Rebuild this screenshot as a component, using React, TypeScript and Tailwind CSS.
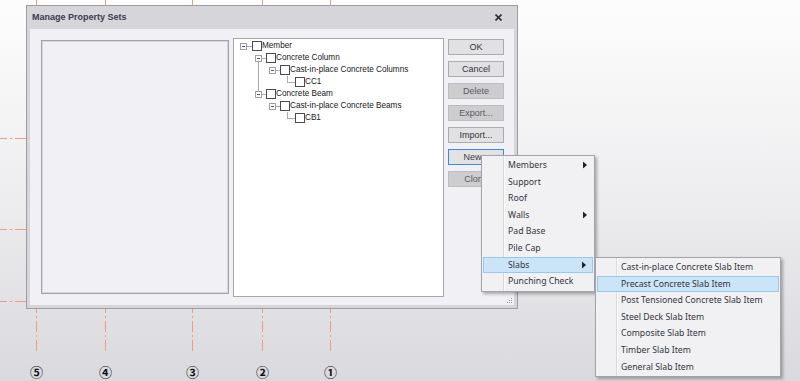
import React from 'react';

const ORANGE = '#f29b7b';

const GRID_X = [36, 105, 192, 262, 330];
const GRID_Y = [138, 229, 301];
const LABELS = ['⑤', '④', '③', '②', '①'];

interface Node {
  label: string;
  level: number;
  leaf?: boolean;
}

const TREE: Node[] = [
  { label: 'Member', level: 0 },
  { label: 'Concrete Column', level: 1 },
  { label: 'Cast-in-place Concrete Columns', level: 2 },
  { label: 'CC1', level: 3, leaf: true },
  { label: 'Concrete Beam', level: 1 },
  { label: 'Cast-in-place Concrete Beams', level: 2 },
  { label: 'CB1', level: 3, leaf: true },
];

// expander centre x and checkbox left, relative to tree inner box
const EXP_X = [9, 24, 38, 53];
const CB_PAD: Record<number, string> = {
  0: 'pl-[18px]',
  1: 'pl-[32px]',
  2: 'pl-[46px]',
  3: 'pl-[61px]',
};
const CB_LEFT = [18, 32, 46, 61];

const MENU = [
  { label: 'Members', sub: true },
  { label: 'Support' },
  { label: 'Roof' },
  { label: 'Walls', sub: true },
  { label: 'Pad Base' },
  { label: 'Pile Cap' },
  { label: 'Slabs', sub: true, active: true },
  { label: 'Punching Check' },
];

const SLABS = [
  { label: 'Cast-in-place Concrete Slab Item' },
  { label: 'Precast Concrete Slab Item', active: true },
  { label: 'Post Tensioned Concrete Slab Item' },
  { label: 'Steel Deck Slab Item' },
  { label: 'Composite Slab Item' },
  { label: 'Timber Slab Item' },
  { label: 'General Slab Item' },
];

const BUTTONS = [
  { label: 'OK', kind: 'normal' },
  { label: 'Cancel', kind: 'normal' },
  { label: 'Delete', kind: 'off' },
  { label: 'Export...', kind: 'off' },
  { label: 'Import...', kind: 'normal' },
  { label: 'New...', kind: 'focus' },
  { label: 'Clone', kind: 'off' },
];

function GridLines() {
  return (
    <svg className="absolute left-0 top-0" width={800} height={381}>
      {GRID_X.map((x) => (
        <line
          key={x}
          x1={x + 0.5}
          y1={-2}
          x2={x + 0.5}
          y2={352}
          stroke={ORANGE}
          strokeDasharray="11 3 2 3"
        />
      ))}
      {GRID_Y.map((y) => (
        <line
          key={y}
          x1={-4}
          y1={y + 0.5}
          x2={40}
          y2={y + 0.5}
          stroke={ORANGE}
          strokeDasharray="11 3 2 3"
        />
      ))}
    </svg>
  );
}

function TreeLines() {
  const cy = (i: number) => 7 + 12 * i;
  const gray = '#a9a9b0';
  const lines: React.ReactNode[] = [];
  // sibling line Concrete Column -> Concrete Beam
  lines.push(<line key="s1" x1={24.5} y1={cy(1)} x2={24.5} y2={cy(4)} stroke={gray} />);
  TREE.forEach((n, i) => {
    const y = cy(i) + 0.5;
    const x = EXP_X[n.level];
    if (n.leaf) {
      lines.push(<line key={`v${i}`} x1={x + 0.5} y1={cy(i) - 6} x2={x + 0.5} y2={y} stroke={gray} />);
    }
    lines.push(<line key={`h${i}`} x1={x} y1={y} x2={CB_LEFT[n.level]} y2={y} stroke={gray} />);
  });
  const boxes = TREE.map((n, i) => {
    if (n.leaf) return null;
    const x = EXP_X[n.level];
    const y = cy(i);
    return (
      <g key={`b${i}`}>
        <rect x={x - 3 + 0.5} y={y - 3 + 0.5} width={6} height={6} fill="#ffffff" stroke="#9ca0ae" />
        <line x1={x - 1} y1={y + 0.5} x2={x + 2} y2={y + 0.5} stroke="#3a5a9c" />
      </g>
    );
  });
  return (
    <svg className="absolute left-0 top-0" width={120} height={100}>
      {lines}
      {boxes}
    </svg>
  );
}

function Arrow() {
  return (
    <svg width={4} height={7} className="absolute right-[7px] top-1/2 -translate-y-1/2">
      <path d="M0 0 L4 3.5 L0 7 Z" fill="#222" />
    </svg>
  );
}

function MenuItem({ label, sub, active, pad }: { label: string; sub?: boolean; active?: boolean; pad: string }) {
  return (
    <div
      className={`relative z-10 h-[16.6px] flex items-center ${pad} ${
        active ? 'mx-[1px] bg-[#cce4f7] outline outline-1 -outline-offset-1 outline-[#99c8ed]' : ''
      }`}
    >
      <span className="text-[8.7px] text-[#34343f] leading-none">{label}</span>
      {sub && <Arrow />}
    </div>
  );
}

function buttonClass(kind: string) {
  if (kind === 'off') return 'bg-[#cdcdcf] border-[#bdbdc0] text-[#5a5a60]';
  if (kind === 'focus') return 'bg-[#e3e3e6] border-[#3e8ad6] text-[#3a3a44]';
  return 'bg-[#e1e1e3] border-[#acacb0] text-[#33333b]';
}

export default function App() {
  return (
    <div
      className="relative w-[800px] h-[381px] overflow-hidden bg-linear-to-b from-[#fdfdfd] via-[#eeeef0] to-[#d9d9de]"
      style={{ fontFamily: '"Liberation Sans", Arial, sans-serif' }}
    >
      <GridLines />

      {LABELS.map((l, i) => (
        <span
          key={l}
          className="absolute top-[363px] w-[20px] -ml-[10px] text-center text-[13px] leading-[18px] font-bold text-[#111]"
          style={{ left: GRID_X[i] + 0.5, fontFamily: '"Noto Sans CJK SC", sans-serif' }}
        >
          {l}
        </span>
      ))}

      {/* dialog window */}
      <div className="absolute left-[26px] top-[5px] w-[492px] h-[304px] border border-[#9d9da6] bg-[#d5d5da] flex flex-col">
        <div className="h-[23px] shrink-0 flex items-center justify-between pl-[5px] pr-[15px]">
          <span className="font-bold text-[9px] text-[#3b3b50] leading-none">Manage Property Sets</span>
          <svg width={7} height={7}>
            <path d="M0.5 0.5 L6.5 6.5 M6.5 0.5 L0.5 6.5" stroke="#2b2b33" strokeWidth={1.6} />
          </svg>
        </div>

        <div className="relative flex-1 mx-[3px] mb-[3px] bg-[#f1f1f5] flex items-start">
          <div className="ml-[11px] mt-[11px] w-[188px] h-[254px] border border-[#a2a2aa] shadow-[inset_1px_1px_0_#d6d6dc,inset_-1px_-1px_0_#d6d6dc] bg-[#f1f1f5]" />

          <div className="relative ml-[4px] mt-[9px] w-[211px] h-[259px] border border-[#a6a6ae] bg-white">
            <TreeLines />
            <div className="relative pt-[1px]">
              {TREE.map((n) => (
                <div key={n.label} className={`flex items-center h-[12px] ${CB_PAD[n.level]}`}>
                  <span className="w-[10px] h-[10px] shrink-0 border border-[#4b4b4f] bg-white" />
                  <span className="text-[8.2px] leading-none text-[#17171c] whitespace-nowrap">{n.label}</span>
                </div>
              ))}
            </div>
          </div>

          <div className="ml-[4px] mt-[10px] w-[56px] flex flex-col gap-[6px]">
            {BUTTONS.map((b) => (
              <div
                key={b.label}
                className={`h-[16px] border flex items-center justify-center text-[9px] leading-none ${buttonClass(b.kind)}`}
              >
                {b.label}
              </div>
            ))}
          </div>

          <svg className="absolute right-[1px] bottom-[1px]" width={7} height={7}>
            {[
              [5, 1],
              [3, 3],
              [5, 3],
              [1, 5],
              [3, 5],
              [5, 5],
            ].map(([x, y]) => (
              <rect key={`${x}-${y}`} x={x} y={y} width={1} height={1} fill="#9a9aa2" />
            ))}
          </svg>
        </div>
      </div>

      {/* context menu */}
      <div
        className="absolute left-[481px] top-[155px] w-[114px] py-[1px] border border-[#a3a3a8] bg-[#f1f1f3] shadow-[2px_2px_3px_rgba(0,0,0,0.3)]"
        style={{ fontFamily: '"Noto Sans", "Liberation Sans", sans-serif' }}
      >
        <div className="absolute left-[21px] top-0 bottom-0 w-[1px] bg-[#d9d9dc]" />
        <div className="absolute left-[22px] top-0 bottom-0 w-[1px] bg-[#fbfbfb]" />
        {MENU.map((m) => (
          <MenuItem key={m.label} label={m.label} sub={m.sub} active={m.active} pad={m.active ? 'pl-[25px]' : 'pl-[26px]'} />
        ))}
      </div>

      {/* slabs submenu */}
      <div
        className="absolute left-[595px] top-[257px] w-[186px] py-[1px] border border-[#a3a3a8] bg-[#f1f1f3] shadow-[2px_2px_3px_rgba(0,0,0,0.3)]"
        style={{ fontFamily: '"Noto Sans", "Liberation Sans", sans-serif' }}
      >
        <div className="absolute left-[20px] top-0 bottom-0 w-[1px] bg-[#d9d9dc]" />
        <div className="absolute left-[21px] top-0 bottom-0 w-[1px] bg-[#fbfbfb]" />
        {SLABS.map((m) => (
          <MenuItem key={m.label} label={m.label} active={m.active} pad={m.active ? 'pl-[24px]' : 'pl-[25px]'} />
        ))}
      </div>
    </div>
  );
}
